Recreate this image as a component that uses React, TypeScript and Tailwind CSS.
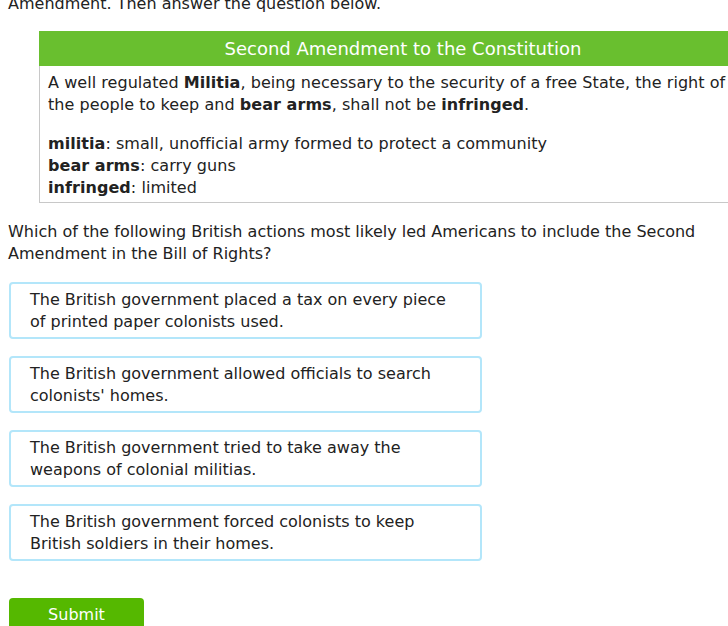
import React from "react";

const options = [
  "The British government placed a tax on every piece of printed paper colonists used.",
  "The British government allowed officials to search colonists' homes.",
  "The British government tried to take away the weapons of colonial militias.",
  "The British government forced colonists to keep British soldiers in their homes.",
];

export default function App() {
  return (
    <div
      className="w-[728px] h-[626px] overflow-hidden bg-white text-[16px] leading-[22px] text-[#222]"
      style={{ fontFamily: '"DejaVu Sans", Verdana, sans-serif' }}
    >
      <div className="-mt-[7px] pl-[8px]">Amendment. Then answer the question below.</div>

      <div className="mt-[16px] ml-[39px] w-[728px] border border-[#c8c8c8] border-t-0">
        <div className="-mx-px h-[35px] bg-[#69bf2f] flex items-center justify-center text-white text-[18px]">
          Second Amendment to the Constitution
        </div>
        <div className="pl-[8px] pr-[20px] pt-[6px] pb-[3px] tracking-[0.05px]">
          <p>
            A well regulated <b>Militia</b>, being necessary to the security of a free State, the right of the people to
            keep and <b>bear arms</b>, shall not be <b>infringed</b>.
          </p>
          <p className="mt-[17px]">
            <b>militia</b>: small, unofficial army formed to protect a community
          </p>
          <p>
            <b>bear arms</b>: carry guns
          </p>
          <p>
            <b>infringed</b>: limited
          </p>
        </div>
      </div>

      <div className="mt-[18px] pl-[8px] pr-[20px]">
        Which of the following British actions most likely led Americans to include the Second Amendment in the Bill of
        Rights?
      </div>

      <div className="mt-[17px] ml-[9px] flex flex-col gap-[17px]">
        {options.map((o) => (
          <div
            key={o}
            className="w-[473px] h-[57px] border-2 border-[#b3e6fa] rounded-[4px] pl-[19px] pr-[25px] pt-[5px]"
          >
            {o}
          </div>
        ))}
      </div>

      <button className="mt-[37px] ml-[9px] w-[135px] h-[34px] rounded-[4px] bg-[#55b800] text-white text-[16px] flex items-center justify-center">
        Submit
      </button>
    </div>
  );
}
